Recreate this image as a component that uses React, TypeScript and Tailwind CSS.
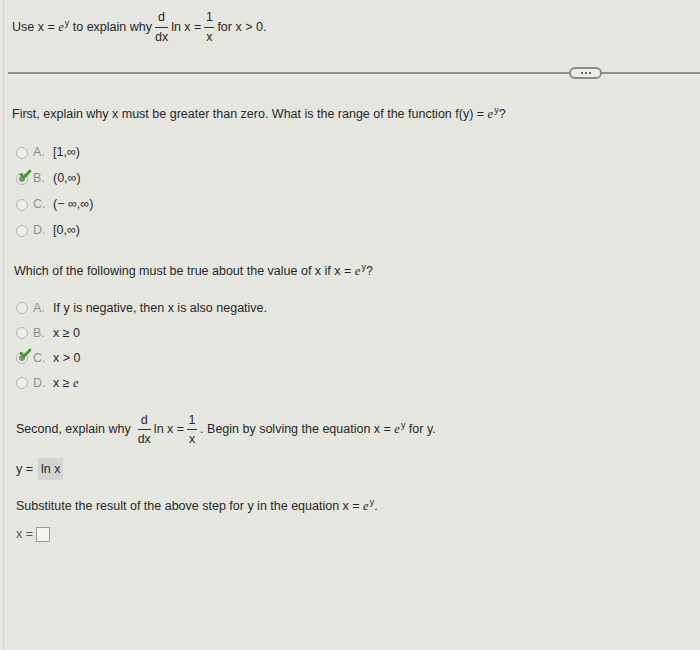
import React from "react";

const E = () => (
  <span className="italic" style={{ fontFamily: '"Liberation Serif", serif' }}>
    e
  </span>
);

const EY = () => (
  <span className="whitespace-nowrap">
    <E />
    <span className="inline-block text-[9px] leading-none -translate-y-[5px] ml-[1px]">y</span>
  </span>
);

const Frac = ({ n, d }: { n: string; d: string }) => (
  <span className="inline-flex flex-col items-center mx-[3px] leading-none">
    <span className="text-[12.5px] pb-[3px]">{n}</span>
    <span className="block w-full min-w-[10px] h-px bg-[#333]" />
    <span className="text-[12.5px] pt-[3px]">{d}</span>
  </span>
);

const Radio = ({ checked }: { checked?: boolean }) => (
  <span className="relative inline-block w-[12px] h-[12px] shrink-0">
    <span className="absolute inset-0 rounded-full border border-[#b3b3ae] bg-[#ecece8]" />
    {checked && (
      <>
        <span className="absolute left-[3px] top-[3px] w-[6px] h-[6px] rounded-full bg-[#8a8a87]" />
        <svg
          className="absolute left-[3px] -top-[4px]"
          width="13"
          height="11"
          viewBox="0 0 13 11"
        >
          <path
            d="M2 5.5 L4.8 8.5 L11 2"
            fill="none"
            stroke="#3a9a2a"
            strokeWidth="2.6"
            strokeLinecap="round"
            strokeLinejoin="round"
          />
        </svg>
      </>
    )}
  </span>
);

const Option = ({
  letter,
  checked,
  h,
  children,
}: {
  letter: string;
  checked?: boolean;
  h: "26" | "25";
  children: React.ReactNode;
}) => (
  <div className={h === "26" ? "flex items-center h-[26px]" : "flex items-center h-[25px]"}>
    <Radio checked={checked} />
    <span className="ml-[5px] w-[20px] text-[#8e8e8e]">{letter}.</span>
    <span className="text-[#262626]">{children}</span>
  </div>
);

export default function App() {
  return (
    <div
      className="w-[700px] h-[650px] bg-[#e6e6e0] text-[#262626] text-[12.5px] overflow-hidden relative"
      style={{ fontFamily: '"Liberation Sans", Arial, sans-serif' }}
    >
      <div className="absolute left-[3px] top-0 bottom-0 w-px bg-[#d6d6d0]" />
      <div className="pl-[12px] h-[54px] flex items-center">
        <span>
          Use x = <EY /> to explain why
        </span>
        <Frac n="d" d="dx" />
        <span>ln x =</span>
        <Frac n="1" d="x" />
        <span>for x &gt; 0.</span>
      </div>

      <div className="mt-[13px] ml-[8px] relative h-[12px] flex items-center">
        <div className="w-full h-[2px] bg-[#8f8f8b]" />
        <div className="absolute left-[561px] top-0 w-[33px] h-[12px] rounded-full border-2 border-[#8a8a86] bg-[#ecece8] flex items-center justify-center gap-[2px]">
          <span className="w-[2px] h-[2px] bg-[#666]" />
          <span className="w-[2px] h-[2px] bg-[#666]" />
          <span className="w-[2px] h-[2px] bg-[#666]" />
        </div>
      </div>

      <div className="pl-[12px] mt-[26px]">
        First, explain why x must be greater than zero. What is the range of the function f(y) = <EY />?
      </div>

      <div className="pl-[16px] mt-[16px] flex flex-col">
        <Option h="26" letter="A">[1,∞)</Option>
        <Option h="26" letter="B" checked>
          (0,∞)
        </Option>
        <Option h="26" letter="C">(− ∞,∞)</Option>
        <Option h="26" letter="D">[0,∞)</Option>
      </div>

      <div className="pl-[14px] mt-[18px]">
        Which of the following must be true about the value of x if x = <EY />?
      </div>

      <div className="pl-[16px] mt-[15px] flex flex-col">
        <Option h="25" letter="A">If y is negative, then x is also negative.</Option>
        <Option h="25" letter="B">x ≥ 0</Option>
        <Option h="25" letter="C" checked>
          x &gt; 0
        </Option>
        <Option h="25" letter="D">
          x ≥ <E />
        </Option>
      </div>

      <div className="pl-[16px] mt-[12px] h-[44px] flex items-center">
        <span>Second, explain why</span>
        <span className="ml-[4px]" />
        <Frac n="d" d="dx" />
        <span>ln x =</span>
        <Frac n="1" d="x" />
        <span>. Begin by solving the equation x = <EY /> for y.</span>
      </div>

      <div className="pl-[16px] mt-[6px] flex items-center">
        <span>y =</span>
        <span className="ml-[5px] bg-[#d2d4d4] px-[3px] py-[2px]">ln x</span>
      </div>

      <div className="pl-[16px] mt-[17px]">
        Substitute the result of the above step for y in the equation x = <EY />.
      </div>

      <div className="pl-[16px] mt-[9px] flex items-center">
        <span className="text-[#555]">x =</span>
        <span className="ml-[3px] w-[14px] h-[15px] border border-[#999] bg-[#f3f3f0]" />
      </div>
    </div>
  );
}
